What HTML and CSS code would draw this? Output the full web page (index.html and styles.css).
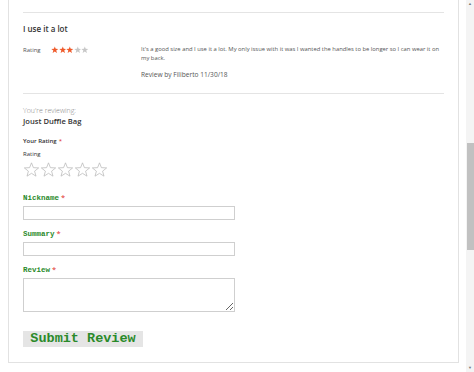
FILE: index.html
```html
<!DOCTYPE html>
<html lang="en">
<head>
  <meta charset="UTF-8">
  <title>Reviews</title>
  <link rel="stylesheet" href="styles.css">
</head>
<body>
  <div class="page">
    <div class="page__main">
      <div class="panel">
        <div class="rule"></div>
        <div class="review">
          <div class="review__title">I use it a lot</div>
          <div class="review__row">
            <div class="review__ratings">
              <span class="review__label">Rating</span>
              <span class="stars-small">
                <svg viewBox="0 0 10 10" class="star-small star-small--on"><polygon points="5,0.5 6.2,3.7 9.6,3.8 6.9,5.9 7.9,9.3 5,7.3 2.1,9.3 3.1,5.9 0.4,3.8 3.8,3.7"/></svg>
                <svg viewBox="0 0 10 10" class="star-small star-small--on"><polygon points="5,0.5 6.2,3.7 9.6,3.8 6.9,5.9 7.9,9.3 5,7.3 2.1,9.3 3.1,5.9 0.4,3.8 3.8,3.7"/></svg>
                <svg viewBox="0 0 10 10" class="star-small star-small--on"><polygon points="5,0.5 6.2,3.7 9.6,3.8 6.9,5.9 7.9,9.3 5,7.3 2.1,9.3 3.1,5.9 0.4,3.8 3.8,3.7"/></svg>
                <svg viewBox="0 0 10 10" class="star-small"><polygon points="5,0.5 6.2,3.7 9.6,3.8 6.9,5.9 7.9,9.3 5,7.3 2.1,9.3 3.1,5.9 0.4,3.8 3.8,3.7"/></svg>
                <svg viewBox="0 0 10 10" class="star-small"><polygon points="5,0.5 6.2,3.7 9.6,3.8 6.9,5.9 7.9,9.3 5,7.3 2.1,9.3 3.1,5.9 0.4,3.8 3.8,3.7"/></svg>
              </span>
            </div>
            <div class="review__body">
              <p class="review__text">It's a good size and I use it a lot. My only issue with it was I wanted the handles to be longer so I can wear it on my back.</p>
              <p class="review__author">Review by Filiberto 11/30/18</p>
            </div>
          </div>
        </div>
        <div class="rule"></div>

        <form class="review-form">
          <div class="review-form__legend">
            <span class="review-form__sub">You're reviewing:</span>
            <strong class="review-form__product">Joust Duffle Bag</strong>
          </div>

          <div class="review-form__rating">
            <div class="review-form__rating-title">Your Rating<span class="req">*</span></div>
            <div class="review-form__rating-label">Rating</div>
            <div class="stars-big">
              <svg viewBox="0 0 20 18" class="star-big"><polygon points="10,1 12.3,6.8 18.6,7.1 13.7,11 15.4,17 10,13.6 4.6,17 6.3,11 1.4,7.1 7.7,6.8"/></svg>
              <svg viewBox="0 0 20 18" class="star-big"><polygon points="10,1 12.3,6.8 18.6,7.1 13.7,11 15.4,17 10,13.6 4.6,17 6.3,11 1.4,7.1 7.7,6.8"/></svg>
              <svg viewBox="0 0 20 18" class="star-big"><polygon points="10,1 12.3,6.8 18.6,7.1 13.7,11 15.4,17 10,13.6 4.6,17 6.3,11 1.4,7.1 7.7,6.8"/></svg>
              <svg viewBox="0 0 20 18" class="star-big"><polygon points="10,1 12.3,6.8 18.6,7.1 13.7,11 15.4,17 10,13.6 4.6,17 6.3,11 1.4,7.1 7.7,6.8"/></svg>
              <svg viewBox="0 0 20 18" class="star-big"><polygon points="10,1 12.3,6.8 18.6,7.1 13.7,11 15.4,17 10,13.6 4.6,17 6.3,11 1.4,7.1 7.7,6.8"/></svg>
            </div>
          </div>

          <div class="field field--first">
            <label class="field__label">Nickname<span class="req">*</span></label>
            <input class="field__input" type="text">
          </div>
          <div class="field">
            <label class="field__label">Summary<span class="req">*</span></label>
            <input class="field__input" type="text">
          </div>
          <div class="field">
            <label class="field__label">Review<span class="req">*</span></label>
            <textarea class="field__area"></textarea>
          </div>

          <button class="btn-submit" type="button">Submit Review</button>
        </form>
      </div>
    </div>
    <div class="scrollbar">
      <span class="scrollbar__arrow">&#9650;</span>
      <div class="scrollbar__track"><div class="scrollbar__thumb"></div></div>
      <span class="scrollbar__arrow">&#9660;</span>
    </div>
  </div>
</body>
</html>
```

FILE: styles.css
```css
* {
  box-sizing: border-box;
}
html, body {
  margin: 0;
  height: 100%;
  background: #fff;
  font-family: 'Open Sans', sans-serif;
  color: #333;
}
p {
  margin: 0;
}
.page {
  display: flex;
  height: 372px;
  overflow: hidden;
}
.page__main {
  width: 466px;
  padding: 0 7px 9px 8px;
  display: flex;
  flex-direction: column;
}
.panel {
  flex: 1;
  border: 1px solid #e2e2e2;
  border-top: 0;
  padding: 12px 14px 0;
}
.rule {
  border-top: 1px solid #e4e4e4;
}

/* review item */
.review {
  padding: 10px 0 0;
  height: 80px;
}
.review__title {
  font-size: 8px;
  font-weight: 600;
  line-height: 12px;
}
.review__row {
  display: flex;
  margin-top: 10px;
}
.review__ratings {
  width: 118px;
  display: flex;
  align-items: center;
  height: 9px;
}
.review__label {
  font-size: 6px;
  width: 28px;
  color: #555;
}
.stars-small {
  display: flex;
}
.star-small {
  width: 7.6px;
  height: 7.6px;
  fill: #c7c7c7;
}
.star-small--on {
  fill: #ef5a2a;
}
.review__body {
  flex: 1;
}
.review__text {
  font-size: 5.85px;
  line-height: 9px;
  color: #555;
}
.review__author {
  font-size: 6.6px;
  line-height: 10px;
  margin-top: 7px;
  color: #555;
}

/* form */
.review-form {
  padding-top: 12px;
}
.review-form__legend {
  display: flex;
  flex-direction: column;
}
.review-form__sub {
  font-size: 7px;
  font-weight: 300;
  color: #888;
  line-height: 10px;
}
.review-form__product {
  font-size: 7.6px;
  font-weight: 600;
  line-height: 10px;
}
.review-form__rating {
  margin-top: 11px;
}
.review-form__rating-title {
  font-size: 6px;
  font-weight: 600;
  line-height: 8px;
}
.review-form__rating-label {
  font-size: 6px;
  line-height: 8px;
  margin-top: 5px;
}
.stars-big {
  display: flex;
  margin-top: 4px;
}
.star-big {
  width: 17px;
  height: 15px;
  fill: none;
  stroke: #b8b8b8;
  stroke-width: 0.9;
}
.req {
  color: #e02b27;
  font-family: 'Open Sans', sans-serif;
  font-weight: normal;
  margin-left: 2px;
}
.field {
  margin-top: 9px;
}
.field--first {
  margin-top: 16px;
}
.field__label {
  display: block;
  font-family: 'Liberation Mono', monospace;
  font-weight: bold;
  font-size: 7.5px;
  line-height: 8px;
  color: #2a8a2a;
}
.field__input,
.field__area {
  display: block;
  width: 212px;
  margin-top: 4px;
  border: 1px solid #cfcfcf;
  background: #fff;
  padding: 0;
}
.field__input {
  height: 14px;
}
.field__area {
  height: 34px;
  resize: vertical;
}
.btn-submit {
  margin-top: 19px;
  width: 120px;
  height: 16px;
  padding: 0;
  border: 0;
  background: #e5e5e5;
  font-family: 'Liberation Mono', monospace;
  font-weight: bold;
  font-size: 13.5px;
  line-height: 16px;
  color: #2a8a2a;
}

/* scrollbar */
.scrollbar {
  width: 8px;
  display: flex;
  flex-direction: column;
  align-items: center;
  background: #f4f4f4;
}
.scrollbar__arrow {
  font-size: 4px;
  line-height: 8px;
  color: #777;
}
.scrollbar__track {
  flex: 1;
  width: 100%;
  padding-top: 135px;
}
.scrollbar__thumb {
  height: 107px;
  margin-left: 1px;
  background: #c1c1c1;
}
```
